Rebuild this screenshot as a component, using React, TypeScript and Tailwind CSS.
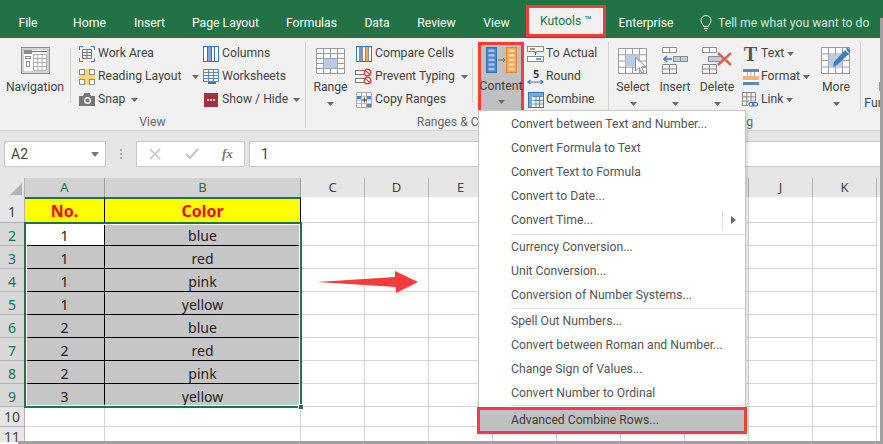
import { ReactNode } from "react";

const tabs = [
  { label: "File", w: "w-[56px]" },
  { label: "Home", w: "w-[67px]" },
  { label: "Insert", w: "w-[53px]" },
  { label: "Page Layout", w: "w-[99px]" },
  { label: "Formulas", w: "w-[73px]" },
  { label: "Data", w: "w-[58px]" },
  { label: "Review", w: "w-[61px]" },
  { label: "View", w: "w-[59px]" },
];

function Caret({ className = "" }: { className?: string }) {
  return (
    <svg width="7" height="4" viewBox="0 0 7 4" className={`shrink-0 ${className}`}>
      <path d="M0 0h7L3.5 4z" fill="#6a6a6a" />
    </svg>
  );
}

/* small grid helper used by the big ribbon icons */
function GridLines({ x, y, w, h, cols, rows, color = "#8c8c8c" }: { x: number; y: number; w: number; h: number; cols: number; rows: number; color?: string }) {
  const lines = [];
  for (let i = 0; i <= cols; i++) {
    const px = x + (w * i) / cols;
    lines.push(<path key={`c${i}`} d={`M${px} ${y}V${y + h}`} stroke={color} strokeWidth="1" />);
  }
  for (let i = 0; i <= rows; i++) {
    const py = y + (h * i) / rows;
    lines.push(<path key={`r${i}`} d={`M${x} ${py}H${x + w}`} stroke={color} strokeWidth="1" />);
  }
  return <>{lines}</>;
}

function NavIcon() {
  return (
    <svg width="29" height="27" viewBox="0 0 29 27">
      <rect x="0.5" y="0.5" width="28" height="26" fill="#fff" stroke="#8c8c8c" />
      <rect x="2" y="2" width="25" height="23" fill="none" stroke="#a8a8a8" />
      <rect x="3" y="3" width="8" height="4" fill="#8c8c8c" />
      <path d="M11 4.5H26" stroke="#d9482f" />
      <GridLines x={12.5} y={7.5} w={13} h={16} cols={3} rows={4} color="#b0b0b0" />
      <rect x="4.5" y="9.5" width="5" height="2" fill="none" stroke="#8c8c8c" />
      <rect x="5.5" y="14.5" width="3" height="5" fill="none" stroke="#8c8c8c" />
    </svg>
  );
}

function WorkAreaIcon() {
  return (
    <svg width="16" height="16" viewBox="0 0 16 16">
      <path d="M.5 4V.5H4M12 .5h3.5V4M15.5 12v3.5H12M4 15.5H.5V12" fill="none" stroke="#3f7fc1" />
      <GridLines x={3.5} y={3.5} w={9} h={9} cols={2} rows={3} color="#777" />
    </svg>
  );
}

function ReadingIcon() {
  return (
    <svg width="16" height="16" viewBox="0 0 16 16">
      <rect x="0" y="0" width="16" height="16" fill="#fff" />
      <GridLines x={0.5} y={0.5} w={15} h={15} cols={3} rows={3} color="#8c8c8c" />
      <rect x="0" y="6" width="16" height="4" fill="#fbd774" />
      <rect x="6" y="0" width="4" height="16" fill="#fbd774" />
    </svg>
  );
}

function CameraIcon() {
  return (
    <svg width="16" height="13" viewBox="0 0 16 13">
      <path d="M0 3h4l1.5-3h5L12 3h4v10H0z" fill="#777" />
      <circle cx="8.5" cy="7.5" r="3.5" fill="#f1f1f1" />
      <circle cx="8.5" cy="7.5" r="2" fill="#777" />
    </svg>
  );
}

function ColumnsIcon() {
  return (
    <svg width="16" height="16" viewBox="0 0 16 16">
      <rect x="0.5" y="0.5" width="15" height="15" fill="#fff" stroke="#3f72ae" />
      <rect x="4" y="1" width="4" height="14" fill="#7da7d4" />
      <path d="M4.5 1v14M8.5 1v14M11.5 1v14" stroke="#3f72ae" />
    </svg>
  );
}

function WorksheetsIcon() {
  return (
    <svg width="16" height="16" viewBox="0 0 16 16">
      <rect x="0.5" y="0.5" width="15" height="12" fill="#fff" />
      <GridLines x={0.5} y={0.5} w={15} h={12} cols={3} rows={4} color="#5b8ac0" />
      <rect x="5" y="13" width="8" height="2" fill="#3f72ae" />
    </svg>
  );
}

function ShowHideIcon() {
  return (
    <svg width="14" height="14" viewBox="0 0 14 14">
      <rect x="0" y="0" width="14" height="14" fill="#a4303d" />
      <path d="M3 7h2M6 7h2M9 7h2" stroke="#fff" strokeWidth="1.4" />
    </svg>
  );
}

function RangeIcon() {
  return (
    <svg width="29" height="26" viewBox="0 0 29 26">
      <rect x="0.5" y="0.5" width="28" height="25" fill="#fff" />
      <GridLines x={0.5} y={0.5} w={28} h={25} cols={4} rows={5} color="#9a9a9a" />
      <rect x="7.5" y="10.5" width="14" height="10" fill="#b9cde2" stroke="#8fa7c0" />
    </svg>
  );
}

function CompareIcon() {
  return (
    <svg width="16" height="16" viewBox="0 0 16 16">
      <rect x="0.5" y="0.5" width="15" height="15" fill="#fff" stroke="#3f72ae" />
      <rect x="3" y="1" width="3" height="14" fill="#6f9fd0" />
      <rect x="9" y="1" width="4" height="14" fill="#f0a85c" />
      <path d="M3.5 1v14M6.5 1v14M9.5 1v14M12.5 1v14" stroke="#8c8c8c" />
    </svg>
  );
}

function PreventIcon() {
  return (
    <svg width="17" height="17" viewBox="0 0 17 17">
      <rect x="0.5" y="2.5" width="10" height="4" fill="#fff" stroke="#777" />
      <rect x="0.5" y="10.5" width="10" height="4" fill="#fff" stroke="#777" />
      <circle cx="12.5" cy="4.5" r="3.2" fill="#fff" stroke="#d9482f" strokeWidth="1.4" />
      <circle cx="12.5" cy="12.5" r="3.2" fill="#fff" stroke="#d9482f" strokeWidth="1.4" />
      <path d="M10.3 2.5l4.4 4M10.3 10.5l4.4 4" stroke="#d9482f" strokeWidth="1.2" />
    </svg>
  );
}

function CopyRangesIcon() {
  return (
    <svg width="16" height="16" viewBox="0 0 16 16">
      <rect x="0" y="0" width="16" height="16" fill="#fff" />
      <GridLines x={0.5} y={0.5} w={15} h={15} cols={3} rows={4} color="#aaa" />
      <rect x="1" y="4" width="4" height="3" fill="#4d86c6" />
      <rect x="11" y="4" width="4" height="3" fill="#4d86c6" />
      <rect x="11" y="12" width="4" height="3" fill="#4d86c6" />
      <path d="M6 8h5M8.5 5.5V10" stroke="#444" />
    </svg>
  );
}

function ContentIcon() {
  const rows = [0, 1, 2, 3, 4];
  return (
    <svg width="31" height="26" viewBox="0 0 31 26">
      <rect x="0.5" y="0.5" width="10" height="25" fill="#4e86c8" stroke="#3a6ea8" />
      <rect x="20.5" y="0.5" width="10" height="25" fill="#f2a65a" stroke="#d98a3a" />
      {rows.map((r) => (
        <g key={r}>
          <rect x="2.5" y={2.5 + r * 4.6} width="6" height="2.4" fill="#a8c8ea" />
          <rect x="22.5" y={2.5 + r * 4.6} width="6" height="2.4" fill="#fbd6a8" />
        </g>
      ))}
      <path d="M12 13h6" stroke="#666" />
      <path d="M17 11l2 2-2 2" fill="none" stroke="#666" />
    </svg>
  );
}

function ToActualIcon() {
  return (
    <svg width="17" height="16" viewBox="0 0 17 16">
      <rect x="0.5" y="0.5" width="16" height="5" fill="#fff" stroke="#888" />
      <path d="M3 3h5" stroke="#d9482f" strokeWidth="1.4" />
      <rect x="0.5" y="10.5" width="16" height="5" fill="#fff" stroke="#888" />
      <path d="M9 13h5" stroke="#3f72ae" strokeWidth="1.4" />
      <path d="M8.5 6v3M7 7.5l1.5-1.5L10 7.5" fill="none" stroke="#3f72ae" />
    </svg>
  );
}

function RoundIcon() {
  return (
    <svg width="17" height="16" viewBox="0 0 17 16">
      <text x="6" y="9" fontSize="11" fontWeight="700" fill="#444" fontFamily="Noto Sans">5</text>
      <path d="M2 13h13" stroke="#3f72ae" />
      <path d="M3.5 11L1 13l2.500 2M13.500 11l2.500 2-2.500 2" fill="none" stroke="#3f72ae" strokeWidth="1.2" />
    </svg>
  );
}

function CombineIcon() {
  return (
    <svg width="16" height="16" viewBox="0 0 16 16">
      <rect x="0.5" y="0.5" width="15" height="15" fill="#fff" stroke="#3f72ae" />
      <rect x="1" y="1" width="14" height="3" fill="#7da7d4" />
      <rect x="1" y="1" width="3" height="14" fill="#7da7d4" />
      <path d="M4.500 4.500h11M4.500 8.500h11M4.500 12h11M8 4.500v11M11.500 4.500v11" stroke="#5b8ac0" />
    </svg>
  );
}

function SelectIcon() {
  return (
    <svg width="30" height="26" viewBox="0 0 30 26">
      <rect x="0.5" y="0.5" width="28" height="25" fill="#fff" />
      <GridLines x={0.5} y={0.5} w={28} h={25} cols={4} rows={4} color="#9a9a9a" />
      <rect x="7.500" y="6.500" width="14" height="12" fill="#b9cde2" />
      <path d="M17.500 9.500V23l3.500-3.500 2.500 5.500 2.500-1-2.500-5.200H28z" fill="#fff" stroke="#8c8c8c" />
    </svg>
  );
}

function InsertIcon() {
  return (
    <svg width="26" height="27" viewBox="0 0 26 27">
      <path d="M.5.5h14v5H.5zM7.500.5v5" fill="#fff" stroke="#8c8c8c" />
      <rect x="11.500" y="9.500" width="14" height="5" fill="#b9cde2" stroke="#8c8c8c" />
      <path d="M18.500 9.500v5" stroke="#8c8c8c" />
      <path d="M2 12h8" stroke="#3f7fc1" strokeWidth="1.6" />
      <path d="M5 9L2 12l3 3" fill="none" stroke="#3f7fc1" strokeWidth="1.6" />
      <GridLines x={0.5} y={17.500} w={14} h={9} cols={2} rows={2} />
    </svg>
  );
}

function DeleteIcon() {
  return (
    <svg width="31" height="27" viewBox="0 0 31 27">
      <path d="M.5.5h14v5H.5zM7.500.5v5" fill="#fff" stroke="#8c8c8c" />
      <rect x="6.500" y="9.500" width="14" height="5" fill="#b9cde2" stroke="#8c8c8c" />
      <GridLines x={0.5} y={17.500} w={14} h={9} cols={2} rows={2} />
      <path d="M16 6l13 12M29 6L16 18" stroke="#d9664a" strokeWidth="2.400" />
    </svg>
  );
}

function TextIcon() {
  return <span className="flex w-[16px] justify-center font-['Liberation_Serif',serif] text-[20px] font-bold leading-none text-[#555]">T</span>;
}

function FormatIcon() {
  return (
    <svg width="16" height="16" viewBox="0 0 16 16">
      <rect x="0" y="0" width="16" height="16" fill="#fff" />
      <rect x="0" y="0" width="16" height="3" fill="#5b8ac0" />
      <rect x="0" y="7" width="16" height="4" fill="#f2b872" />
      <rect x="0" y="13" width="16" height="3" fill="#5b8ac0" />
      <path d="M4.500 3v4M8 3v4M11.500 3v4" stroke="#9db8d6" />
    </svg>
  );
}

function LinkIcon() {
  return (
    <svg width="17" height="16" viewBox="0 0 17 16">
      <GridLines x={0.5} y={0.5} w={13} h={13} cols={3} rows={3} color="#8c8c8c" />
      <rect x="6" y="9.500" width="10" height="6" fill="#f1f1f1" />
      <rect x="7" y="10.500" width="5" height="3.500" rx="1.500" fill="none" stroke="#3f72ae" strokeWidth="1.200" />
      <rect x="10.500" y="10.500" width="5" height="3.500" rx="1.500" fill="none" stroke="#3f72ae" strokeWidth="1.200" />
    </svg>
  );
}

function MoreIcon() {
  return (
    <svg width="30" height="27" viewBox="0 0 30 27">
      <rect x="0.500" y="0.500" width="28" height="26" fill="#fff" />
      <GridLines x={0.5} y={0.5} w={28} h={26} cols={4} rows={4} color="#9a9a9a" />
      <rect x="7.500" y="7.500" width="14" height="12" fill="#b9cde2" />
      <path d="M12 20l1-5L24 3l4 4-12 11z" fill="#3f7fc1" />
      <path d="M25 2l1.500-1.500 3 3L28 6z" fill="#3f7fc1" />
    </svg>
  );
}

function SmallButton({ icon, label, caret, gap = "gap-[3px]", caretMl = "ml-[3px]", iconW = "w-[17px]" }: { icon: ReactNode; label: string; caret?: boolean; gap?: string; caretMl?: string; iconW?: string }) {
  return (
    <div className={`flex h-[23px] items-center whitespace-nowrap ${gap}`}>
      <span className={`flex shrink-0 items-center justify-center ${iconW}`}>{icon}</span>
      <span className="-mt-[1px]">{label}</span>
      {caret && <Caret className={caretMl} />}
    </div>
  );
}

function BigButton({ icon, label, w, caret = true }: { icon: ReactNode; label: string; w: string; caret?: boolean }) {
  return (
    <div className={`flex shrink-0 flex-col items-center pt-[5px] ${w}`}>
      <div className="flex h-[27px] items-center">{icon}</div>
      <div className="mt-[5px] leading-[17px]">{label}</div>
      {caret && <Caret className="mt-[6px]" />}
    </div>
  );
}

function Group({ label, w, children }: { label: string; w: string; children: ReactNode }) {
  return (
    <div className={`flex shrink-0 flex-col ${w}`}>
      <div className="flex h-[76px] pt-[4px]">{children}</div>
      <div className="h-[16px] whitespace-nowrap text-center leading-[16px] text-[#6a6a6a]">{label}</div>
    </div>
  );
}

function GroupSep() {
  return <div className="mt-[4px] h-[86px] w-px shrink-0 bg-[#d2d2d2]" />;
}

function Ribbon() {
  return (
    <div className="flex h-[93px] border-b border-[#d2d2d2] bg-[#f1f1f1] text-[12.2px] text-[#444]">
      <Group label="View" w="w-[305px]">
        <div className="flex w-[70px] shrink-0 flex-col items-center pt-[5px]">
          <div className="flex h-[27px] items-center">
            <NavIcon />
          </div>
          <div className="mt-[5px] leading-[17px]">Navigation</div>
        </div>
        <div className="mt-[6px] h-[55px] w-px shrink-0 bg-[#d2d2d2]" />
        <div className="ml-[7px] w-[124px] shrink-0">
          <SmallButton icon={<WorkAreaIcon />} label="Work Area" />
          <SmallButton icon={<ReadingIcon />} label="Reading Layout" caret caretMl="ml-[8px]" />
          <SmallButton icon={<CameraIcon />} label="Snap" caret />
        </div>
        <div className="w-[103px] shrink-0">
          <SmallButton icon={<ColumnsIcon />} label="Columns" />
          <SmallButton icon={<WorksheetsIcon />} label="Worksheets" />
          <SmallButton icon={<ShowHideIcon />} label="Show / Hide" caret caretMl="ml-[2px]" />
        </div>
      </Group>
      <GroupSep />
      <Group label="Ranges & Cells" w="w-[302px]">
        <BigButton icon={<RangeIcon />} label="Range" w="w-[49px]" />
        <div className="w-[117px] shrink-0">
          <SmallButton icon={<CompareIcon />} label="Compare Cells" />
          <SmallButton icon={<PreventIcon />} label="Prevent Typing" caret />
          <SmallButton icon={<CopyRangesIcon />} label="Copy Ranges" />
        </div>
        <div className="mt-[6px] h-[55px] w-px shrink-0 bg-[#d2d2d2]" />
        <div className="ml-[5px] flex h-[71px] w-[46px] shrink-0 flex-col items-center border-[3px] border-[#f53c3c] bg-[#c0c0c0] pt-[2px]">
          <ContentIcon />
          <div className="mt-[5px] leading-[17px] text-[#3c3c3c]">Content</div>
          <Caret className="mt-[5px]" />
        </div>
        <div className="ml-[3px] w-[80px] shrink-0">
          <SmallButton icon={<ToActualIcon />} label="To Actual" gap="gap-[2px]" />
          <SmallButton icon={<RoundIcon />} label="Round" gap="gap-[2px]" />
          <SmallButton icon={<CombineIcon />} label="Combine" gap="gap-[2px]" />
        </div>
      </Group>
      <GroupSep />
      <Group label="Editing" w="w-[251px]">
        <BigButton icon={<SelectIcon />} label="Select" w="w-[48px]" />
        <BigButton icon={<InsertIcon />} label="Insert" w="w-[36px]" />
        <BigButton icon={<DeleteIcon />} label="Delete" w="w-[48px]" />
        <div className="ml-[1px] w-[79px] shrink-0">
          <SmallButton icon={<TextIcon />} label="Text" caret gap="gap-[2px]" caretMl="ml-[1px]" />
          <SmallButton icon={<FormatIcon />} label="Format" caret gap="gap-[2px]" caretMl="ml-[1px]" />
          <SmallButton icon={<LinkIcon />} label="Link" caret gap="gap-[2px]" caretMl="ml-[1px]" />
        </div>
        <BigButton icon={<MoreIcon />} label="More" w="w-[30px]" />
      </Group>
      <div className="mt-[4px] h-[68px] w-px shrink-0 bg-[#d2d2d2]" />
      <div className="flex w-[60px] shrink-0 flex-col items-center pt-[41px] leading-[16px]">
        <div>Help</div>
        <div>Functions</div>
      </div>
    </div>
  );
}

function FormulaBar() {
  return (
    <div className="flex h-[47px] items-start gap-[4px] bg-[#e6e6e6] pl-[4px] pt-[10px] text-[14px] text-[#444]">
      <div className="flex h-[26px] w-[102px] shrink-0 items-center justify-between border border-[#c6c6c6] bg-white pl-[6px] pr-[6px]">
        <span>A2</span>
        <svg width="8" height="5" viewBox="0 0 8 5">
          <path d="M0 0h8L4 5z" fill="#777" />
        </svg>
      </div>
      <div className="flex h-[26px] w-[22px] shrink-0 flex-col items-center justify-center gap-[2px]">
        <span className="h-[2px] w-[2px] bg-[#aaa]" />
        <span className="h-[2px] w-[2px] bg-[#aaa]" />
        <span className="h-[2px] w-[2px] bg-[#aaa]" />
      </div>
      <div className="flex h-[26px] w-[109px] shrink-0 items-center border border-[#c6c6c6] bg-white pl-[12px]">
        <svg width="12" height="12" viewBox="0 0 12 12">
          <path d="M1 1l10 10M11 1L1 11" stroke="#c4c4c4" strokeWidth="1.600" />
        </svg>
        <svg width="14" height="12" viewBox="0 0 14 12" className="ml-[24px]">
          <path d="M1 6l4 4 8-9" fill="none" stroke="#c4c4c4" strokeWidth="2" />
        </svg>
        <span className="ml-[23px] font-['Liberation_Serif',serif] text-[13px] font-bold italic text-[#777]">fx</span>
      </div>
      <div className="flex h-[26px] flex-1 items-center border-y border-l border-[#c6c6c6] bg-white pl-[11px]">1</div>
    </div>
  );
}

const gridCols = "grid grid-cols-[25px_80px_196px_repeat(9,64px)]";
const emptyCols = ["C", "D", "E", "F", "G", "H", "I", "J", "K"];
const rows = [
  { n: 2, no: "1", color: "blue", first: true },
  { n: 3, no: "1", color: "red" },
  { n: 4, no: "1", color: "pink" },
  { n: 5, no: "1", color: "yellow" },
  { n: 6, no: "2", color: "blue" },
  { n: 7, no: "2", color: "red" },
  { n: 8, no: "2", color: "pink" },
  { n: 9, no: "3", color: "yellow" },
];

function EmptyCells() {
  return (
    <>
      {emptyCols.map((c) => (
        <div key={c} className="border-b border-r border-[#d4d4d4] bg-white" />
      ))}
    </>
  );
}

function Sheet() {
  const rowHeader = "flex items-center justify-center border-b border-r border-[#b4b4b4] text-[14px] leading-none";
  return (
    <div className="relative h-[264px] overflow-hidden font-['Noto_Sans',sans-serif] text-[14px] leading-none text-[#222]">
      {/* column headers */}
      <div className={`${gridCols} h-[19px] bg-[#e6e6e6] text-[13px] text-[#444]`}>
        <div className="flex items-end justify-end border-r border-[#b4b4b4] p-[2px]">
          <div className="h-0 w-0 border-b-[12px] border-l-[12px] border-b-[#b4b4b4] border-l-transparent" />
        </div>
        <div className="flex items-center justify-center border-r border-[#9e9e9e] bg-[#d2d2d2] text-[#217346]">A</div>
        <div className="flex items-center justify-center border-r border-[#9e9e9e] bg-[#d2d2d2] text-[#217346]">B</div>
        {emptyCols.map((c) => (
          <div key={c} className="flex items-center justify-center border-r border-[#b4b4b4]">
            {c}
          </div>
        ))}
      </div>

      {/* header row */}
      <div className={`${gridCols} h-[26px]`}>
        <div className={`${rowHeader} bg-[#e6e6e6] pt-[4px] text-[#444]`}>1</div>
        <div className="flex items-center justify-center border-b border-r border-t-2 border-b-black border-r-black border-t-[#217346] bg-[#ffff00] text-[16px] font-bold text-[#ff0000]">No.</div>
        <div className="flex items-center justify-center border-b border-r border-t-2 border-b-black border-r-black border-t-[#217346] bg-[#ffff00] text-[16px] font-bold text-[#ff0000]">Color</div>
        <EmptyCells />
      </div>

      {/* data rows */}
      {rows.map((r) => (
        <div key={r.n} className={`${gridCols} h-[23px]`}>
          <div className={`${rowHeader} bg-[#d8d8d8] pt-[3px] text-[#217346]`}>{r.n}</div>
          <div className={`flex items-center justify-center border-b border-r border-black pt-[3px] ${r.first ? "bg-white" : "bg-[#c6c6c6]"}`}>{r.no}</div>
          <div className="flex items-center justify-center border-b border-r border-black bg-[#c6c6c6] pt-[3px]">{r.color}</div>
          <EmptyCells />
        </div>
      ))}

      {/* trailing empty rows */}
      {[10, 11].map((n) => (
        <div key={n} className={`${gridCols} h-[20px]`}>
          <div className={`${rowHeader} bg-[#e6e6e6] text-[#444]`}>{n}</div>
          <div className="border-b border-r border-[#d4d4d4] bg-white" />
          <div className="border-b border-r border-[#d4d4d4] bg-white" />
          <EmptyCells />
        </div>
      ))}

      {/* selection outline */}
      <div className="absolute left-[24px] top-[44px] h-[186px] w-[278px] border-2 border-[#217346] shadow-[inset_0_0_0_1px_#fff]" />
      <div className="absolute left-[298px] top-[226px] h-[6px] w-[6px] border border-white bg-[#217346]" />

      {/* red arrow */}
      <svg width="102" height="22" viewBox="0 0 102 22" className="absolute left-[317px] top-[93px]">
        <path d="M0 11L78 6V0L101 11 79 22V16z" fill="#f73b3b" />
      </svg>
    </div>
  );
}

const menuGroups = [
  ["Convert between Text and Number...", "Convert Formula to Text", "Convert Text to Formula", "Convert to Date...", "Convert Time..."],
  ["Currency Conversion...", "Unit Conversion...", "Conversion of Number Systems..."],
  ["Spell Out Numbers...", "Convert between Roman and Number...", "Change Sign of Values...", "Convert Number to Ordinal"],
];

function ContentMenu() {
  return (
    <div className="absolute left-[478px] top-[110px] w-[268px] border border-[#c6c6c6] bg-white text-[12.2px] text-[#555] shadow-[2px_2px_2px_rgba(0,0,0,0.12)]">
      <div className="pt-[1px]">
        {menuGroups.map((group, gi) => (
          <div key={gi} className={gi === 0 ? "ml-[32px] border-b border-[#dcdcdc] pb-[2px]" : gi === 1 ? "ml-[32px] border-b border-[#dcdcdc] pb-[1px]" : "ml-[32px]"}>
            {group.map((item) => (
              <div key={item} className="relative flex h-[24px] items-center whitespace-nowrap">
                {item}
                {item === "Convert Time..." && (
                  <div className="absolute right-[9px] top-0 flex h-[24px] items-center">
                    <div className="mr-[8px] h-[19px] w-px bg-[#e0e0e0]" />
                    <svg width="5" height="8" viewBox="0 0 5 8">
                      <path d="M0 0l5 4-5 4z" fill="#666" />
                    </svg>
                  </div>
                )}
              </div>
            ))}
          </div>
        ))}
      </div>
      <div className="mb-[1px] ml-[32px] mr-[1px] h-px bg-[#dcdcdc]" />
      <div className="-mx-[2px] -mb-[2px] flex h-[27px] items-center border-[3px] border-[#f53c3c] bg-[#c0c0c0] pl-[31px] text-[#3c3c3c]">Advanced Combine Rows...</div>
    </div>
  );
}

export default function App() {
  return (
    <div className="relative h-[444px] w-[883px] overflow-hidden bg-white font-['Roboto',sans-serif]">
      {/* tab bar */}
      <div className="flex h-[38px] bg-[#217346] text-[12.2px] text-white">
        {tabs.map((t) => (
          <div key={t.label} className={`flex items-center justify-center pt-[8px] ${t.w}`}>
            {t.label}
          </div>
        ))}
        <div className="mt-[5px] flex h-[32px] w-[80px] items-center justify-center border-[3px] border-[#f53c3c] bg-[#f1f1f1] text-[#217346]">Kutools ™</div>
        <div className="flex w-[80px] items-center justify-center pt-[8px]">Enterprise</div>
        <div className="ml-[14px] flex items-center gap-[6px] whitespace-nowrap pt-[8px] text-[#d4e6da]">
          <svg width="12" height="16" viewBox="0 0 12 16" fill="none" stroke="#e6f0ea" strokeWidth="1">
            <path d="M3.500 11.500C3.500 9.500 1 8.500 1 5.500a5 5 0 0 1 10 0c0 3-2.500 4-2.500 6zM4 13.500h4M5 15.500h2" />
          </svg>
          <span>Tell me what you want to do</span>
        </div>
      </div>
      <Ribbon />
      <FormulaBar />
      <Sheet />
      <ContentMenu />

      {/* window shadow along the right and bottom edge */}
      <div className="absolute bottom-0 right-0 top-[18px] w-[3px] bg-[#a0a0a0]" />
      <div className="absolute bottom-0 left-[18px] right-0 h-[3px] bg-[#a0a0a0]" />
    </div>
  );
}
